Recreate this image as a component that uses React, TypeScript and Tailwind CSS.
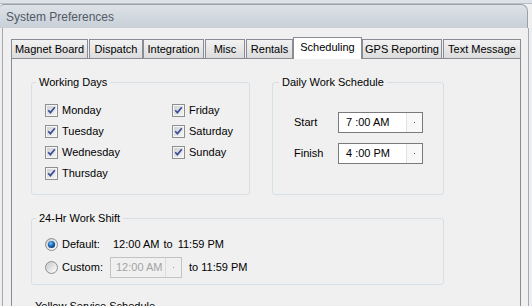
import React from "react";

const tabs = [
  { label: "Magnet Board", cls: "w-[77px]", ml: "ml-0" },
  { label: "Dispatch", cls: "w-[54px]", ml: "ml-[1px]" },
  { label: "Integration", cls: "w-[61px]", ml: "ml-0" },
  { label: "Misc", cls: "w-[40px]", ml: "ml-[1px]" },
  { label: "Rentals", cls: "w-[47px]", ml: "ml-[1px]" },
  { label: "Scheduling", cls: "w-[69px]", ml: "ml-0", active: true },
  { label: "GPS Reporting", cls: "w-[80px]", ml: "ml-0" },
  { label: "Text Message", cls: "w-[78px]", ml: "ml-[1px]" },
];

function Check() {
  return (
    <svg width="13" height="13" viewBox="0 0 13 13" className="shrink-0">
      <defs>
        <linearGradient id="cbg" x1="0" y1="0" x2="1" y2="1">
          <stop offset="0" stopColor="#cfd1d3" />
          <stop offset="1" stopColor="#f4f4f4" />
        </linearGradient>
      </defs>
      <rect x="0.5" y="0.5" width="12" height="12" fill="#f6f6f6" stroke="#8e8f8f" />
      <rect x="2" y="2" width="9" height="9" fill="url(#cbg)" />
      <path d="M3.2 6.2 L5.4 8.6 L9.8 3.2" fill="none" stroke="#3b4e95" strokeWidth="1.7" />
    </svg>
  );
}

function Radio({ on }: { on?: boolean }) {
  return (
    <svg width="13" height="13" viewBox="0 0 13 13" className="shrink-0">
      <defs>
        <radialGradient id="rdot" cx="0.4" cy="0.35" r="0.7">
          <stop offset="0" stopColor="#7fc4f5" />
          <stop offset="0.5" stopColor="#1d6fc0" />
          <stop offset="1" stopColor="#0b2f68" />
        </radialGradient>
        <linearGradient id="rbg" x1="0" y1="0" x2="1" y2="1">
          <stop offset="0" stopColor="#c9cbcd" />
          <stop offset="1" stopColor="#fbfbfb" />
        </linearGradient>
      </defs>
      <circle cx="6.5" cy="6.5" r="6" fill="url(#rbg)" stroke="#8e8f8f" />
      <circle cx="6.5" cy="6.5" r="4.6" fill="url(#rbg)" />
      {on && <circle cx="6.5" cy="6.5" r="3.6" fill="url(#rdot)" />}
    </svg>
  );
}

function TimeBox({ value, disabled, w }: { value: string; disabled?: boolean; w: string }) {
  return (
    <div
      className={`${w} h-[21px] flex border ${
        disabled ? "border-[#c3c3c3] bg-[#f0f0f0] text-[#a3a3a3]" : "border-[#7a7a7a] bg-white text-black"
      }`}
    >
      <div className={`flex-1 flex items-center ${disabled ? "pl-[5px]" : "pl-[7px]"}`}>{value}</div>
      <div className={`w-[16px] border-l flex items-center justify-center ${disabled ? "border-[#dcdcdc]" : "border-[#e3e3e3] bg-[#f8f8f8]"}`}>
        <div className={`w-[1px] h-[1px] ${disabled ? "bg-[#9a9a9a]" : "bg-[#555]"}`} />
      </div>
    </div>
  );
}

function Group({
  title,
  cls,
  inner,
  lg,
  children,
}: {
  title: string;
  cls: string;
  inner: string;
  lg: string;
  children: React.ReactNode;
}) {
  return (
    <fieldset className={`border border-[#d5dfe5] rounded-[3px] ${cls}`}>
      <legend className={`${lg} px-[3px] leading-[13px]`}>{title}</legend>
      <div className={inner}>{children}</div>
    </fieldset>
  );
}

export default function App() {
  const col1 = ["Monday", "Tuesday", "Wednesday", "Thursday"];
  const col2 = ["Friday", "Saturday", "Sunday"];
  return (
    <div className="w-[532px] h-[306px] overflow-hidden bg-[#f0f0f0] font-['Liberation_Sans',Arial,sans-serif] text-[11px] text-black">
      <div className="h-[4px] bg-[#dde2e8] border-b border-[#b7bec7]" />
      <div className="h-[24px] mr-[4px] rounded-tr-[7px] rounded-tl-[4px] bg-gradient-to-b from-[#dde2e8] to-[#c8cfd7] border-t border-r border-[#9aa1aa] flex items-center pl-[6px]">
        <span className="text-[12px] text-[#515a66]">System Preferences</span>
      </div>
      <div className="flex h-[278px]">
        <div className="w-[3px] border-r border-[#a4a9b0] bg-[#eceef1]" />
        <div className="flex-1 pl-[8px] pt-[9px]">
          <div className="flex items-end h-[21px]">
            {tabs.map((t) =>
              t.active ? (
                <div
                  key={t.label}
                  className={`${t.cls} ${t.ml} h-[22px] -mb-[1px] bg-white border border-b-0 border-[#898c95] flex items-center justify-center pb-[3px] relative z-10`}
                >
                  {t.label}
                </div>
              ) : (
                <div
                  key={t.label}
                  className={`${t.cls} ${t.ml} h-[19px] bg-gradient-to-b from-[#f2f2f2] to-[#dcdcdc] border border-b-0 border-[#898c95] flex items-center justify-center pt-[1px]`}
                >
                  {t.label}
                </div>
              )
            )}
          </div>
          <div className="w-[510px] h-[260px] border border-[#898c95] bg-[#f0f0f0] pl-[19px] pt-[17px]">
            <div className="flex items-start">
              <Group title="Working Days" cls="w-[219px] h-[119px]" lg="ml-[4px]" inner="pl-[13px] pt-[11px]">
                <div className="flex">
                  <div className="w-[127px] flex flex-col">
                    {col1.map((d) => (
                      <div key={d} className="h-[21px] flex items-center gap-[4px]">
                        <Check />
                        <span>{d}</span>
                      </div>
                    ))}
                  </div>
                  <div className="flex flex-col">
                    {col2.map((d) => (
                      <div key={d} className="h-[21px] flex items-center gap-[4px]">
                        <Check />
                        <span>{d}</span>
                      </div>
                    ))}
                  </div>
                </div>
              </Group>
              <Group
                title="Daily Work Schedule"
                cls="ml-[22px] w-[172px] h-[119px]"
                lg="ml-[6px]"
                inner="pl-[21px] pt-[23px]"
              >
                <div className="flex flex-col gap-[10px]">
                  <div className="flex items-center">
                    <span className="w-[44px]">Start</span>
                    <TimeBox value="7 :00 AM" w="w-[85px]" />
                  </div>
                  <div className="flex items-center">
                    <span className="w-[44px]">Finish</span>
                    <TimeBox value="4 :00 PM" w="w-[85px]" />
                  </div>
                </div>
              </Group>
            </div>
            <Group title="24-Hr Work Shift" cls="mt-[17px] w-[413px] h-[73px]" lg="ml-[4px]" inner="pl-[13px] pt-[9px]">
              <div className="flex flex-col gap-[2px]">
                <div className="h-[21px] flex items-center">
                  <Radio on />
                  <span className="ml-[4px] w-[51px]">Default:</span>
                  <span>12:00 AM</span>
                  <span className="ml-[4px]">to</span>
                  <span className="ml-[5px]">11:59 PM</span>
                </div>
                <div className="h-[21px] flex items-center">
                  <Radio />
                  <span className="ml-[4px] w-[48px]">Custom:</span>
                  <TimeBox value="12:00 AM" w="w-[72px]" disabled />
                  <span className="ml-[7px]">to 11:59 PM</span>
                </div>
              </div>
            </Group>
            <div className="mt-[13px] pl-[4px]">Yellow Service Schedule</div>
          </div>
        </div>
        <div className="w-[4px] border-l border-[#a4a9b0] bg-[#eceef1]" />
      </div>
    </div>
  );
}
